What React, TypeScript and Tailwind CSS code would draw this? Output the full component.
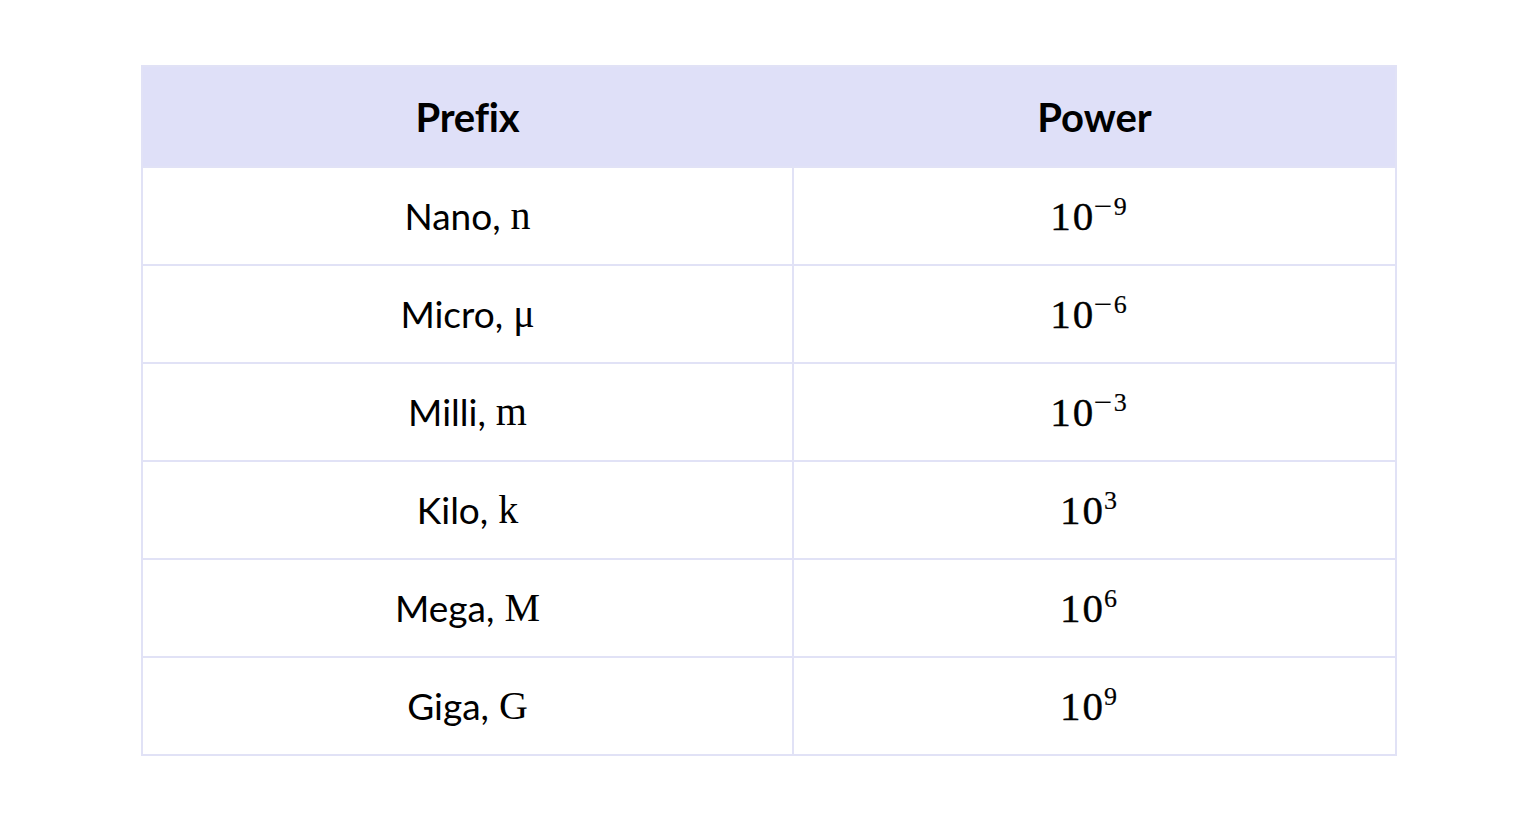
import React from "react";

const rows: { name: string; sym: string; neg: boolean; exp: string }[] = [
  { name: "Nano,", sym: "n", neg: true, exp: "9" },
  { name: "Micro,", sym: "μ", neg: true, exp: "6" },
  { name: "Milli,", sym: "m", neg: true, exp: "3" },
  { name: "Kilo,", sym: "k", neg: false, exp: "3" },
  { name: "Mega,", sym: "M", neg: false, exp: "6" },
  { name: "Giga,", sym: "G", neg: false, exp: "9" },
];

const sans = "font-['Lato','Open_Sans',sans-serif]";
const serif = "font-['Liberation_Serif','DejaVu_Serif',serif]";

export default function App() {
  return (
    <div className="w-[1536px] h-[827px] bg-white pt-[65px] pl-[141px]">
      <div className="w-[1256px] border-2 border-[#e1e2f6]">
        <div className="grid grid-cols-[649px_603px] h-[99px] bg-[#dfe0f8]">
          <div className={`flex items-center justify-center text-[40px] font-bold text-black tracking-[-0.2px] ${sans}`}>
            Prefix
          </div>
          <div className={`flex items-center justify-center pl-[2px] text-[40px] font-bold text-black ${sans}`}>
            Power
          </div>
        </div>
        {rows.map((r) => (
          <div key={r.name} className="grid grid-cols-[649px_603px] h-[98px] border-t-2 border-[#e1e2f6]">
            <div className="flex items-center justify-center text-black">
              <span className={`text-[37px] ${sans}`}>{r.name}</span>
              <span className={`ml-[10px] text-[40px] ${serif}`}>{r.sym}</span>
            </div>
            <div className="flex items-center justify-center border-l-2 border-[#e1e2f6] pr-[12px] text-black">
              <span className={`text-[41px] leading-none tracking-[2px] [-webkit-text-stroke:0.4px_black] ${serif}`}>
                10
                <sup className="text-[26px] relative top-[-15px] align-baseline ml-[-1px] tracking-[0px] [-webkit-text-stroke:0.2px_black]">
                  {r.neg && <span className="inline-block scale-x-125 origin-left mr-[5px]">−</span>}
                  {r.exp}
                </sup>
              </span>
            </div>
          </div>
        ))}
      </div>
    </div>
  );
}
